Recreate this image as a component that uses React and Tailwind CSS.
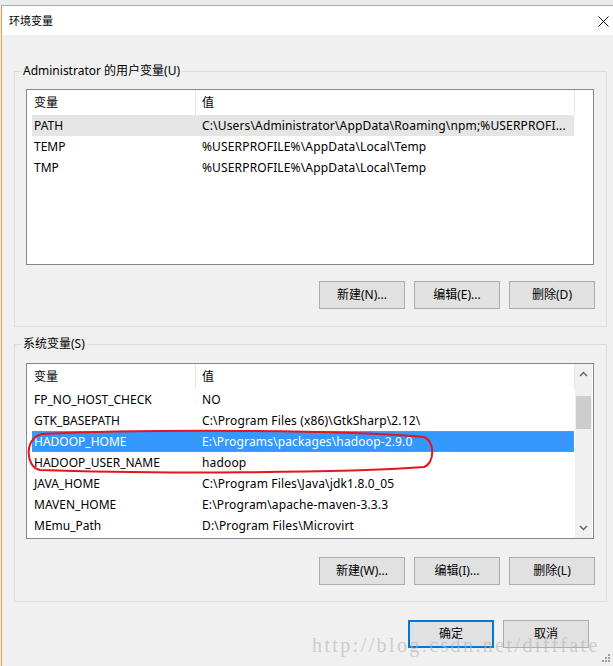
// 环境变量对话框（Windows 10 风格）
const UI_FONT = "font-['Noto_Sans','Noto_Sans_CJK_SC',sans-serif]";

const userVars = [
  { name: 'PATH', value: 'C:\\Users\\Administrator\\AppData\\Roaming\\npm;%USERPROFI...', state: 'inactive' },
  { name: 'TEMP', value: '%USERPROFILE%\\AppData\\Local\\Temp' },
  { name: 'TMP', value: '%USERPROFILE%\\AppData\\Local\\Temp' },
];

const systemVars = [
  { name: 'FP_NO_HOST_CHECK', value: 'NO' },
  { name: 'GTK_BASEPATH', value: 'C:\\Program Files (x86)\\GtkSharp\\2.12\\' },
  { name: 'HADOOP_HOME', value: 'E:\\Programs\\packages\\hadoop-2.9.0', state: 'selected' },
  { name: 'HADOOP_USER_NAME', value: 'hadoop' },
  { name: 'JAVA_HOME', value: 'C:\\Program Files\\Java\\jdk1.8.0_05' },
  { name: 'MAVEN_HOME', value: 'E:\\Program\\apache-maven-3.3.3' },
  { name: 'MEmu_Path', value: 'D:\\Program Files\\Microvirt' },
];

function VarRow({ row }) {
  const selected = row.state === 'selected';
  const inactive = row.state === 'inactive';
  return (
    <div
      className={`flex h-[21px] w-[542px] items-center whitespace-nowrap border ${
        selected
          ? 'border-dotted border-[#c8873c] bg-[#3399ff] text-white'
          : inactive
            ? 'border-transparent bg-[#e5e5e5] text-black'
            : 'border-transparent text-black'
      }`}
    >
      <div className="w-[162px] shrink-0 pl-[1px]">{row.name}</div>
      <div className="truncate pl-[7px] tracking-[0.15px]">{row.value}</div>
    </div>
  );
}

function ScrollBar() {
  return (
    <div className="flex w-[17px] shrink-0 flex-col items-center bg-[#f0f0f0]">
      <div className="flex h-[20px] w-full items-center justify-center">
        <svg width="9" height="6" viewBox="0 0 9 6" fill="none" stroke="#606060" strokeWidth="1.4">
          <path d="M1 5 L4.5 1.5 L8 5" />
        </svg>
      </div>
      <div className="mt-[12px] h-[33px] w-[15px] bg-[#cdcdcd]" />
      <div className="flex-1" />
      <div className="flex h-[20px] w-full items-center justify-center">
        <svg width="9" height="6" viewBox="0 0 9 6" fill="none" stroke="#606060" strokeWidth="1.4">
          <path d="M1 1 L4.5 4.5 L8 1" />
        </svg>
      </div>
    </div>
  );
}

function VarList({ rows, scroll, className }) {
  return (
    <div className={`flex h-[176px] w-[568px] border border-[#828790] bg-white text-[12px] leading-[16px] ${className}`}>
      <div className="flex w-[548px] shrink-0 flex-col">
        <div className="flex h-[25px] items-center">
          <div className="flex h-full w-[169px] items-center border-r border-[#e5e5e5] pl-[7px]">变量</div>
          <div className="flex h-full flex-1 items-center border-r border-[#e5e5e5] pl-[6px]">值</div>
        </div>
        <div className="flex flex-col pl-[5px]">
          {rows.map((r) => (
            <VarRow key={r.name} row={r} />
          ))}
        </div>
      </div>
      {scroll && <ScrollBar />}
    </div>
  );
}

function Btn({ children, primary }) {
  return (
    <button
      type="button"
      className={`flex h-[28px] w-[86px] items-center justify-center bg-[#e1e1e1] text-[12px] text-black ${
        primary ? 'border-2 border-[#0078d7]' : 'border border-[#adadad]'
      }`}
    >
      {children}
    </button>
  );
}

function Group({ label, rows, scroll, buttons, className }) {
  return (
    <fieldset className={`w-[593px] border border-[#dcdcdc] pl-[11px] pr-[11px] ${className}`}>
      <legend className="-ml-[5px] px-[2px] text-[12px] leading-[16px] text-black">{label}</legend>
      <VarList rows={rows} scroll={scroll} className={scroll ? 'mt-[11px]' : 'mt-[10px]'} />
      <div className={`flex justify-end gap-[9px] ${scroll ? 'mt-[18px] pb-[16px]' : 'mt-[16px] pb-[17px]'}`}>
        {buttons.map((b) => (
          <Btn key={b}>{b}</Btn>
        ))}
      </div>
    </fieldset>
  );
}

export default function App() {
  return (
    <div className={`relative h-[666px] w-[613px] overflow-hidden bg-[#ebebeb] pl-[1px] pt-[5px] ${UI_FONT}`}>
      <div className="h-[700px] w-[640px] border-l border-t border-[#e3a05c] bg-[#f0f0f0]">
        {/* 标题栏 */}
        <div className="flex h-[29px] w-[611px] items-center justify-between bg-white pl-[7px] pr-[4px] pt-[2px]">
          <span className="text-[11px] text-black">环境变量</span>
          <svg width="11" height="11" viewBox="0 0 11 11" stroke="#111" strokeWidth="1">
            <path d="M0.5 0.5 L10.5 10.5 M10.5 0.5 L0.5 10.5" />
          </svg>
        </div>

        <div className="ml-[12px] flex w-[593px] flex-col">
          <Group
            label="Administrator 的用户变量(U)"
            rows={userVars}
            buttons={['新建(N)...', '编辑(E)...', '删除(D)']}
            className="mt-[28px]"
          />
          <Group
            label="系统变量(S)"
            rows={systemVars}
            scroll
            buttons={['新建(W)...', '编辑(I)...', '删除(L)']}
            className="mt-[9px]"
          />
          <div className="mt-[18px] flex justify-end gap-[9px] pr-[18px]">
            <Btn primary>确定</Btn>
            <Btn>取消</Btn>
          </div>
        </div>
      </div>

      {/* 红色圈注 */}
      <svg className="pointer-events-none absolute inset-0" width="613" height="666" fill="none">
        <path
          d="M42 434 C150 429 340 430 424 437 C435 441 435 463 424 467 C340 473 150 474 40 470 C25 467 24 438 42 434 Z"
          stroke="#e3161b"
          strokeWidth="2"
        />
      </svg>

      {/* 水印 */}
      <div className="pointer-events-none absolute left-[312px] top-[633px] font-['Liberation_Serif',serif] text-[20px] leading-[24px] tracking-[2.4px] text-[#b4b4b4]/60">
        http://blog.csdn.net/difffate
      </div>

      {/* 调整大小手柄 */}
      <svg className="absolute left-[602px] top-[654px]" width="9" height="9" viewBox="0 0 9 9" fill="#a0a0a0">
        <rect x="6" y="0" width="2" height="2" />
        <rect x="3" y="3" width="2" height="2" />
        <rect x="6" y="3" width="2" height="2" />
        <rect x="0" y="6" width="2" height="2" />
        <rect x="3" y="6" width="2" height="2" />
        <rect x="6" y="6" width="2" height="2" />
      </svg>
    </div>
  );
}
